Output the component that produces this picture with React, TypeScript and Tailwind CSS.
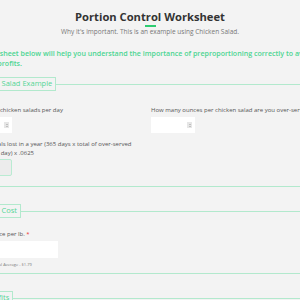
import React from "react";

const font = { fontFamily: '"Open Sans", "DejaVu Sans", sans-serif' };

function Legend({ hidden, text }: { hidden: string; text: string }) {
  return (
    <div className="flex items-center">
      <div className="border border-[#b2e9cd] px-[3px] h-[14px] flex items-center text-[7.5px] text-[#55d596] whitespace-nowrap">
        {hidden}
        {text}
      </div>
      <div className="flex-1 h-px bg-[#b2e9cd]" />
    </div>
  );
}

function Spinner() {
  return (
    <div className="w-[5px] h-[6px] bg-[#e6e6e6] flex flex-col items-center justify-center gap-[1px]">
      <div className="w-0 h-0 border-l-[1.5px] border-r-[1.5px] border-b-[1.5px] border-l-transparent border-r-transparent border-b-[#999]" />
      <div className="w-0 h-0 border-l-[1.5px] border-r-[1.5px] border-t-[1.5px] border-l-transparent border-r-transparent border-t-[#999]" />
    </div>
  );
}

function NumInput() {
  return (
    <div className="w-[44px] h-[16px] bg-white flex items-center justify-end pr-[3px]">
      <Spinner />
    </div>
  );
}

export default function App() {
  return (
    <div className="w-[300px] h-[300px] overflow-hidden bg-[#f3f3f3] flex justify-center" style={font}>
      <div className="w-[364px] shrink-0">
        <div className="flex flex-col items-center pt-[9px]">
          <div className="text-[11.2px] leading-[15px] font-bold text-[#333] whitespace-nowrap">Portion Control Worksheet</div>
          <div className="w-[11px] h-[2px] bg-[#2ecc71] mt-[1px]" />
          <div className="text-[6.5px] leading-[7px] text-[#777] mt-[1px] whitespace-nowrap">
            Why it's important. This is an example using Chicken Salad.
          </div>
        </div>

        <div className="mt-[13px] text-[7.1px] leading-[10px] font-semibold text-[#4cd592] whitespace-nowrap">
          The worksheet below will help you understand the importance of preproportioning correctly to avoid
          <br />
          a loss in profits.
        </div>

        <div className="mt-[9px]">
          <Legend hidden="Chicken " text="Salad Example" />
          <div className="grid grid-cols-[183px_1fr] mt-[15px]">
            <div>
              <div className="text-[6px] leading-[8px] text-[#555] whitespace-nowrap">Number of chicken salads per day</div>
              <div className="mt-[3px]">
                <NumInput />
              </div>
            </div>
            <div>
              <div className="text-[6px] leading-[8px] text-[#555] whitespace-nowrap">
                How many ounces per chicken salad are you over-serving?
              </div>
              <div className="mt-[3px]">
                <NumInput />
              </div>
            </div>
          </div>
          <div className="mt-[7px] text-[6px] leading-[9px] text-[#555] whitespace-nowrap">
            Total # meals lost in a year (365 days x total of over-served
            <br />
            ounces per day) x .0625
          </div>
          <div className="mt-[1px] w-[44px] h-[17px] bg-[#ececec] border border-[#b9ebd2] rounded-[2px]" />
          <div className="mt-[10px] h-px bg-[#b2e9cd]" />
        </div>

        <div className="mt-[17px]">
          <Legend hidden="Chicken " text="Cost" />
          <div className="mt-[12px] text-[6px] leading-[8px] text-[#555] whitespace-nowrap">
            Chicken Price per lb. <span className="text-[#e33]">*</span>
          </div>
          <div className="mt-[3px] w-[90px] h-[17px] bg-white" />
          <div className="mt-[4px] text-[4px] leading-[6px] text-[#777] whitespace-nowrap">Based on National Average - $1.79</div>
          <div className="mt-[5px] h-px bg-[#b2e9cd]" />
        </div>

        <div className="mt-[17px]">
          <Legend hidden="Net Prof" text="its" />
        </div>
      </div>
    </div>
  );
}
